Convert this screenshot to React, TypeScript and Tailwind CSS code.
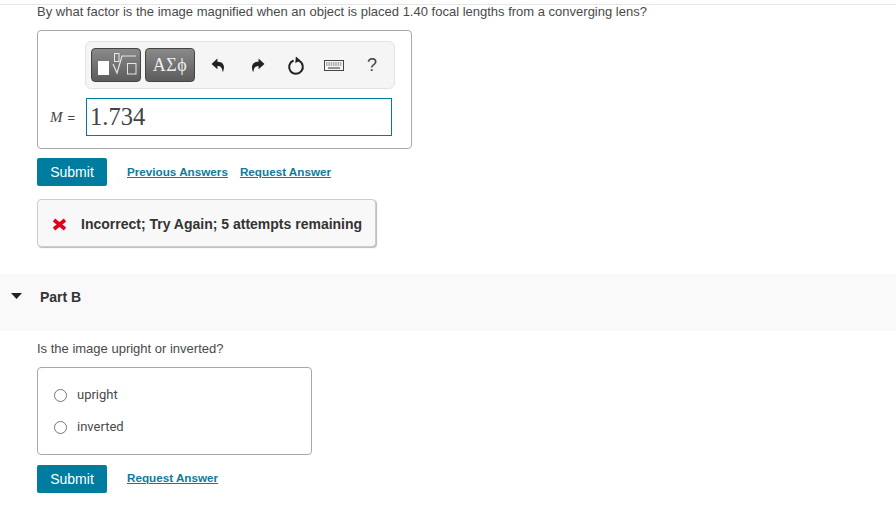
import React from "react";

const sans = "font-['Liberation_Sans',Arial,sans-serif]";

function SubmitBtn() {
  return (
    <button className={`w-[70px] h-[28px] bg-[#007c9f] rounded-[2px] text-white text-[14px] ${sans}`}>Submit</button>
  );
}

function Link({ children }: { children: React.ReactNode }) {
  return <a className={`text-[#0f7a9b] underline text-[11.7px] font-bold ${sans}`}>{children}</a>;
}

function ToolBtn({ children }: { children: React.ReactNode }) {
  return (
    <div className="w-[50px] h-[34px] rounded-[4px] border border-[#444] bg-gradient-to-b from-[#8a8a8a] to-[#5c5c5c] flex items-center justify-center">
      {children}
    </div>
  );
}

function Radio({ label }: { label: string }) {
  return (
    <div className="flex items-center gap-[10px] h-[32px]">
      <span className="w-[13px] h-[13px] rounded-full border border-[#777] bg-white" />
      <span className="text-[13px] text-[#4a4a4a] font-['Roboto',sans-serif]">{label}</span>
    </div>
  );
}

export default function App() {
  return (
    <div className={`w-[896px] h-[512px] bg-white overflow-hidden text-[#444] ${sans}`}>
      <div className="mt-[4px] pl-[37px] border-t border-[#e6e6e6] h-[26px]">
        <p className="text-[13px] leading-[14px] text-[#4a4a4a] whitespace-nowrap">
          By what factor is the image magnified when an object is placed 1.40 focal lengths from a converging lens?
        </p>
      </div>

      <div className="ml-[37px] w-[375px] h-[119px] border border-[#a8a8a8] rounded-[4px] pt-[10px] pl-[47px]">
        <div className="w-[310px] h-[48px] bg-[#f5f5f5] border border-[#e3e3e3] rounded-[6px] flex items-center pl-[5px]">
          <div className="flex gap-[4px]">
            <ToolBtn>
              <svg width="48" height="32" viewBox="0 0 48 32" fill="none">
                <rect x="6" y="12" width="11" height="14" fill="#fff" />
                <rect x="22.5" y="4.5" width="4.5" height="8" stroke="#e6e6e6" strokeWidth="1" />
                <path d="M21 15l4 9 5-17h14" stroke="#e6e6e6" strokeWidth="1.2" />
                <rect x="35.5" y="14.5" width="8.5" height="10.5" stroke="#e6e6e6" strokeWidth="1" />
              </svg>
            </ToolBtn>
            <ToolBtn>
              <span className="text-[#eee] text-[18px] font-['Liberation_Serif',serif] tracking-[0.5px]">ΑΣϕ</span>
            </ToolBtn>
          </div>
          <div className="flex items-center">
            <svg className="ml-[16px]" width="15" height="15" viewBox="0 0 14 14">
              <path d="M6 0.5 L0.5 5.5 L6 10.5 V7.5 C9 7.5 10.5 9 11 13.5 C13.5 8 12 3.5 6 3.5 Z" fill="#222" />
            </svg>
            <svg className="ml-[24px]" width="15" height="15" viewBox="0 0 14 14">
              <path d="M8 0.5 L13.5 5.5 L8 10.5 V7.5 C5 7.5 3.5 9 3 13.5 C0.5 8 2 3.5 8 3.5 Z" fill="#222" />
            </svg>
            <svg className="ml-[22px]" width="18" height="19" viewBox="0 0 17 18" fill="none">
              <path d="M6.2 4.3 A6.5 6.5 0 1 0 11 4.4" stroke="#222" strokeWidth="1.9" />
              <path d="M8.4 0.5 L12.8 4.3 L7.8 6.6 Z" fill="#222" />
            </svg>
            <svg className="ml-[19px]" width="20" height="11" viewBox="0 0 20 11" fill="none">
              <rect x="0.5" y="0.5" width="19" height="10" fill="#f5f5f5" stroke="#444" />
              <path d="M2 3h16M2 5h16" stroke="#666" strokeWidth="1" strokeDasharray="1.5 0.8" />
              <path d="M4 8h12" stroke="#666" strokeWidth="1.4" />
            </svg>
            <span className={`ml-[23px] text-[18px] text-[#444] ${sans}`}>?</span>
          </div>
        </div>
        <div className="flex items-center -ml-[35px] mt-[9px]">
          <span className="w-[36px] text-[13px] text-[#444] whitespace-nowrap">
            <i className="font-['Liberation_Serif',serif] text-[15px]">M</i>
            <span className="ml-[5px]">=</span>
          </span>
          <div className="w-[306px] h-[38px] border border-[#007c9f] flex items-center pl-[3px] text-[24.5px] text-[#444] font-['Liberation_Serif',serif]">
            1.734
          </div>
        </div>
      </div>

      <div className="ml-[37px] mt-[9px] flex items-center">
        <SubmitBtn />
        <div className="ml-[20px] flex gap-[12px]">
          <Link>Previous Answers</Link>
          <Link>Request Answer</Link>
        </div>
      </div>

      <div className="ml-[37px] mt-[13px] w-[339px] h-[48px] bg-[#f8f8f8] border border-[#ccc] rounded-[4px] shadow-[1px_1px_1px_#bbb] flex items-center pl-[14px] pt-[2px]">
        <svg width="15" height="13" viewBox="0 0 15 13">
          <path d="M2 2 L13 11 M13 2 L2 11" stroke="#e2001a" strokeWidth="3.6" />
        </svg>
        <span className="ml-[14px] text-[14px] font-bold text-[#333] whitespace-nowrap">
          Incorrect; Try Again; 5 attempts remaining
        </span>
      </div>

      <div className="mt-[27px] h-[57px] bg-[#f9f9f9] flex items-start pt-[15px] pl-[11px]">
        <svg className="mt-[4px]" width="11" height="6" viewBox="0 0 11 6">
          <path d="M0 0 H11 L5.5 6 Z" fill="#222" />
        </svg>
        <span className="ml-[18px] text-[14px] leading-[16px] font-bold text-[#333]">Part B</span>
      </div>

      <p className="ml-[37px] mt-[11px] text-[13px] leading-[14px] text-[#4a4a4a]">Is the image upright or inverted?</p>

      <div className="ml-[37px] mt-[11px] w-[275px] h-[88px] border border-[#a8a8a8] rounded-[4px] pl-[16px] pt-[11px]">
        <Radio label="upright" />
        <Radio label="inverted" />
      </div>

      <div className="ml-[37px] mt-[10px] flex items-center">
        <SubmitBtn />
        <div className="ml-[20px] -mt-[5px]">
          <Link>Request Answer</Link>
        </div>
      </div>
    </div>
  );
}
